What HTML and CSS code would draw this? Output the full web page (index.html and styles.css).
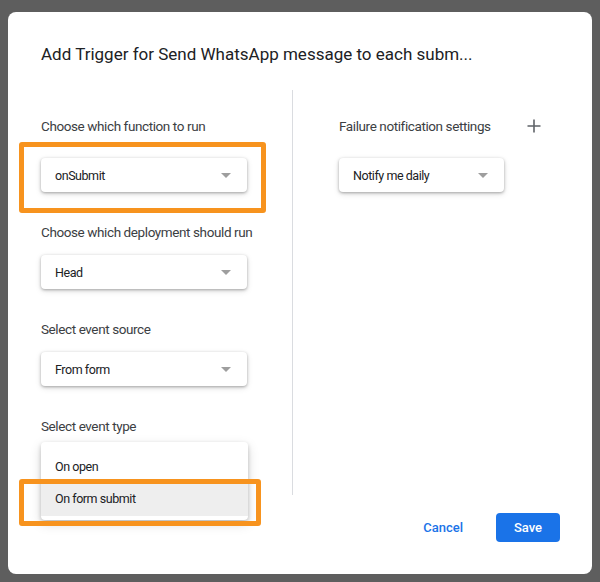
FILE: index.html
```html
<!DOCTYPE html>
<html lang="en">
<head>
    <meta charset="UTF-8">
    <meta name="viewport" content="width=device-width, initial-scale=1.0">
    <title>Add Trigger</title>
    <link rel="stylesheet" href="styles.css">
</head>
<body>
    <div class="dialog">
        <h2 class="dialog-title">Add Trigger for Send WhatsApp message to each subm...</h2>
        <div class="dialog-body">
            <div class="column left-column">
                <div class="field">
                    <div class="field-label first-label">Choose which function to run</div>
                    <div class="select">
                        <span>onSubmit</span>
                        <span class="arrow"></span>
                        <div class="mark mark-function"></div>
                    </div>
                </div>
                <div class="field">
                    <div class="field-label">Choose which deployment should run</div>
                    <div class="select">
                        <span>Head</span>
                        <span class="arrow"></span>
                    </div>
                </div>
                <div class="field">
                    <div class="field-label">Select event source</div>
                    <div class="select">
                        <span>From form</span>
                        <span class="arrow"></span>
                    </div>
                </div>
                <div class="field event-type">
                    <div class="field-label">Select event type</div>
                    <!-- open dropdown menu -->
                    <div class="menu">
                        <div class="menu-item">On open</div>
                        <div class="menu-item selected">On form submit</div>
                        <div class="mark mark-event"></div>
                    </div>
                </div>
            </div>
            <div class="column right-column">
                <div class="field-label with-action">
                    <span>Failure notification settings</span>
                    <svg class="plus" width="14" height="14" viewBox="0 0 14 14">
                        <path d="M7 0.5v13M0.5 7h13" stroke="#5f6368" stroke-width="1.6" fill="none"/>
                    </svg>
                </div>
                <div class="select notify-select">
                    <span>Notify me daily</span>
                    <span class="arrow"></span>
                </div>
            </div>
        </div>
        <div class="dialog-footer">
            <button class="btn btn-text">Cancel</button>
            <button class="btn btn-primary">Save</button>
        </div>
    </div>
</body>
</html>
```

FILE: styles.css
```css
body {
    margin: 0;
    background-color: #5e5e5e;
    font-family: Roboto, "Liberation Sans", Arial, sans-serif;
    color: #3c4043;
}
.dialog {
    margin: 12px 0 0 8px;
    width: 584px;
    height: 562px;
    background-color: white;
    border-radius: 8px;
    box-sizing: border-box;
    padding: 30px 32px 0 33px;
    display: flex;
    flex-direction: column;
}
.dialog-title {
    margin: 0;
    font-size: 17px;
    font-weight: 400;
    line-height: 24px;
    color: #202124;
}
.dialog-body {
    margin-top: 24px;
    display: flex;
    height: 405px;
}
.column {
    box-sizing: border-box;
}
.left-column {
    width: 252px;
    padding-top: 26px;
    border-right: 1px solid #dadce0;
}
.right-column {
    padding: 26px 0 0 46px;
    flex: 1;
}
.field {
    margin-bottom: 30px;
    position: relative;
}
.field-label {
    font-size: 13.5px;
    letter-spacing: -0.4px;
    line-height: 20px;
    color: #3c4043;
    margin-bottom: 13px;
}
.first-label {
    margin-bottom: 22px;
}
.with-action {
    display: flex;
    justify-content: space-between;
    align-items: center;
    width: 202px;
    margin-bottom: 22px;
}
.select {
    position: relative;
    width: 206px;
    height: 34px;
    box-sizing: border-box;
    padding: 0 14px;
    display: flex;
    align-items: center;
    justify-content: space-between;
    background-color: white;
    border-radius: 4px;
    box-shadow: 0 1px 3px rgba(0, 0, 0, 0.3), 0 2px 6px rgba(0, 0, 0, 0.12);
    font-size: 12.5px;
    letter-spacing: -0.45px;
    color: #202124;
}
.notify-select {
    width: 165px;
}
.arrow {
    width: 0;
    height: 0;
    border-left: 5px solid transparent;
    border-right: 5px solid transparent;
    border-top: 5px solid #9e9e9e;
    margin-right: 2px;
}
.menu {
    position: absolute;
    top: 26px;
    left: 0;
    width: 207px;
    padding: 9px 0 4px;
    background-color: white;
    border-radius: 4px;
    box-shadow: 0 2px 4px rgba(0, 0, 0, 0.2), 0 4px 12px rgba(0, 0, 0, 0.15);
    z-index: 2;
}
.menu-item {
    height: 32px;
    line-height: 32px;
    padding: 0 14px;
    font-size: 12.5px;
    letter-spacing: -0.45px;
    color: #202124;
}
.menu-item.selected {
    background-color: #eeeeee;
    height: 33px;
    line-height: 31px;
}
/* orange highlight frames */
.mark {
    position: absolute;
    border: 5px solid #f7931e;
    border-radius: 3px;
    pointer-events: none;
}
.mark-function {
    top: -16px;
    left: -22px;
    right: -19px;
    bottom: -21px;
}
.mark-event {
    top: 37px;
    left: -22px;
    right: -13px;
    bottom: -6px;
}
.dialog-footer {
    display: flex;
    justify-content: flex-end;
    align-items: center;
    gap: 25px;
    margin-top: 18px;
}
.btn {
    font-family: Roboto, "Liberation Sans", Arial, sans-serif;
    font-size: 13px;
    font-weight: 500;
    border: none;
    border-radius: 4px;
    height: 29px;
    cursor: pointer;
}
.btn-text {
    background: none;
    color: #1a73e8;
    padding: 0 8px;
}
.btn-primary {
    background-color: #1a73e8;
    color: white;
    width: 64px;
}
```
